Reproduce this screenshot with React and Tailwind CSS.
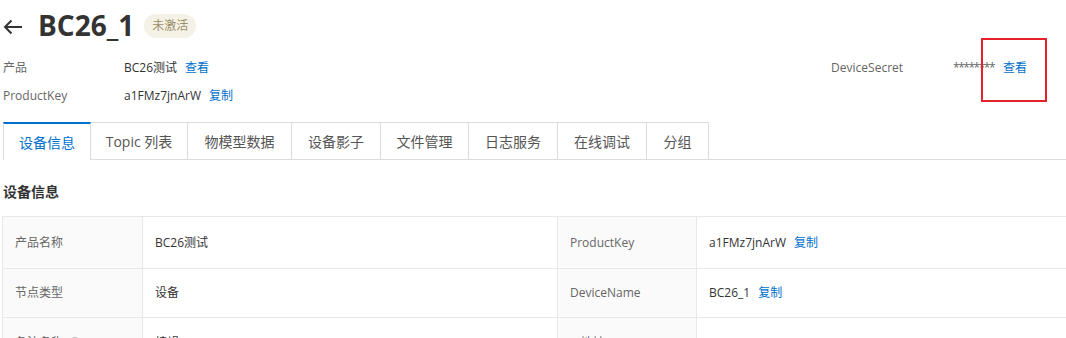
import React from "react";

const font = { fontFamily: '"Open Sans", "Noto Sans CJK SC", sans-serif' };

function Cell({ children, label, className = "" }) {
  return (
    <div
      className={
        "flex items-center border-r border-b border-[#e8e8e8] px-3 text-[12px] " +
        (label ? "bg-[#fafafa] text-[#666]" : "bg-white text-[#333]") +
        " " +
        className
      }
    >
      {children}
    </div>
  );
}

export default function App() {
  const tabs = [
    ["设备信息", "w-[88px]"],
    ["Topic 列表", "w-[97px]"],
    ["物模型数据", "w-[104px]"],
    ["设备影子", "w-[89px]"],
    ["文件管理", "w-[88px]"],
    ["日志服务", "w-[89px]"],
    ["在线调试", "w-[89px]"],
    ["分组", "w-[62px]"],
  ];
  return (
    <div className="relative w-[1066px] h-[338px] overflow-hidden bg-white" style={font}>
      {/* header */}
      <div className="flex items-center h-[50px] pl-[3px]">
        <svg width="20" height="16" viewBox="0 0 20 16" className="mt-[3px]">
          <path d="M19 8H2M8.5 1.5L2 8l6.5 6.5" fill="none" stroke="#333" strokeWidth="2" />
        </svg>
        <span className="ml-[15px] text-[28px] font-bold text-[#333] leading-none">BC26_1</span>
        <span className="ml-[10px] mt-[2px] rounded-full bg-[#f4f2e6] px-[8px] h-[24px] flex items-center text-[12px] text-[#9c8e66]">
          未激活
        </span>
      </div>
      {/* meta */}
      <div className="flex text-[12px] pl-[3px]">
        <div className="flex flex-col">
          <div className="flex h-[28px] items-center mt-[4px]">
            <span className="w-[121px] text-[#666]">产品</span>
            <span className="text-[#333]">BC26测试</span>
            <span className="ml-[8px] text-[#0070cc]">查看</span>
          </div>
          <div className="flex h-[28px] items-center">
            <span className="w-[121px] text-[#666]">ProductKey</span>
            <span className="text-[#333]">a1FMz7jnArW</span>
            <span className="ml-[8px] text-[#0070cc]">复制</span>
          </div>
        </div>
        <div className="ml-auto flex h-[28px] items-center mt-[4px] pr-[39px]">
          <span className="w-[122px] text-[#666]">DeviceSecret</span>
          <span className="text-[#666] tracking-[-1.5px]">********</span>
          <span className="ml-[9px] text-[#0070cc]">查看</span>
        </div>
      </div>
      {/* red highlight */}
      <div className="absolute left-[981px] top-[38px] w-[66px] h-[64px] border-2 border-[#e5212b]" />
      {/* tabs */}
      <div className="flex mt-[12px] pl-[3px] h-[38px]">
        {tabs.map(([t, w], i) =>
          i === 0 ? (
            <div
              key={t}
              className={`${w} flex items-center justify-center border-t-2 border-t-[#0070cc] border-l border-r border-[#dcdcdc] text-[14px] text-[#0070cc]`}
            >
              {t}
            </div>
          ) : (
            <div
              key={t}
              className={`${w} flex items-center justify-center border-t border-r border-b border-[#dcdcdc] text-[14px] text-[#555]`}
            >
              {t}
            </div>
          )
        )}
        <div className="flex-1 border-b border-[#dcdcdc]" />
      </div>
      {/* section */}
      <div className="pl-[3px] mt-[22px] text-[14px] font-bold text-[#333] leading-[20px]">设备信息</div>
      <div className="ml-[2px] mt-[14px] border-t border-l border-[#e8e8e8] grid grid-cols-[140px_415px_139px_1fr] w-[1080px]">
        <Cell label className="h-[52px]">产品名称</Cell>
        <Cell className="h-[52px]">BC26测试</Cell>
        <Cell label className="h-[52px]">ProductKey</Cell>
        <Cell className="h-[52px]">
          a1FMz7jnArW<span className="ml-[8px] text-[#0070cc]">复制</span>
        </Cell>
        <Cell label className="h-[49px]">节点类型</Cell>
        <Cell className="h-[49px]">设备</Cell>
        <Cell label className="h-[49px]">DeviceName</Cell>
        <Cell className="h-[49px]">
          BC26_1<span className="ml-[8px] text-[#0070cc]">复制</span>
        </Cell>
        <Cell label className="h-[51px]">
          备注名称
          <span className="ml-[6px] inline-block w-[12px] h-[12px] rounded-full border border-[#bbb]" />
        </Cell>
        <Cell className="h-[51px]">编辑</Cell>
        <Cell label className="h-[51px]">IP地址</Cell>
        <Cell className="h-[51px]"></Cell>
      </div>
    </div>
  );
}
